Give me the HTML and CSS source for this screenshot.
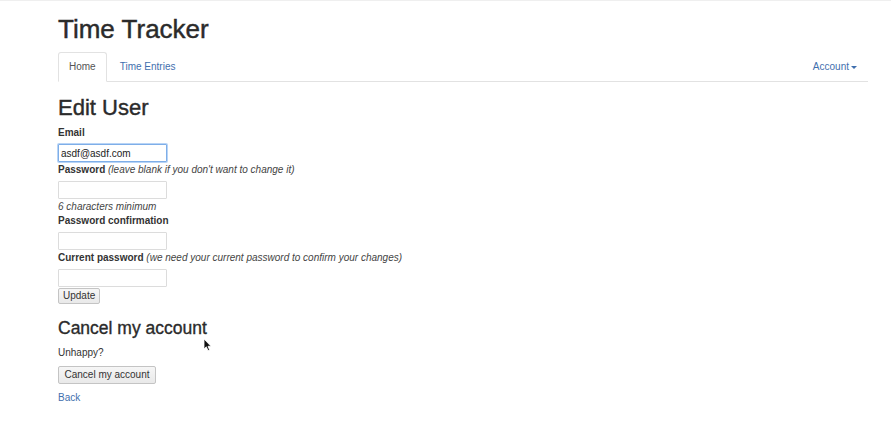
FILE: index.html
```html
<!DOCTYPE html>
<html lang="en">
<head>
<meta charset="utf-8">
<title>Time Tracker</title>
<link rel="stylesheet" href="styles.css">
</head>
<body>
<div class="container">
  <h1 class="brand">Time Tracker</h1>
  <ul class="tabs">
    <li class="tab active"><a href="#">Home</a></li>
    <li class="tab"><a href="#">Time Entries</a></li>
    <li class="tab right"><a href="#">Account<span class="caret"></span></a></li>
  </ul>

  <h2 class="title">Edit User</h2>
  <form class="form">
    <label class="lbl">Email</label>
    <input class="inp focus" type="email" value="asdf@asdf.com">
    <label class="lbl">Password <i class="note">(leave blank if you don't want to change it)</i></label>
    <input class="inp" type="password">
    <em class="hint">6 characters minimum</em>
    <label class="lbl">Password confirmation</label>
    <input class="inp" type="password">
    <label class="lbl">Current password <i class="note">(we need your current password to confirm your changes)</i></label>
    <input class="inp" type="password">
    <div class="actions"><button type="button" class="btn">Update</button></div>
  </form>

  <h3 class="subtitle">Cancel my account</h3>
  <p class="text">Unhappy?</p>
  <div class="actions2"><button type="button" class="btn btn-wide">Cancel my account</button></div>
  <a class="back" href="#">Back</a>
</div>
<svg class="cursor" width="9" height="14" viewBox="0 0 9 14"><path d="M1 1 L1 11 L3.3 8.8 L5 12.6 L6.6 11.9 L5 8.3 L8 8.3 Z" fill="#111" stroke="#fff" stroke-width="0.8"/></svg>
</body>
</html>
```

FILE: styles.css
```css
html, body {
  margin: 0;
  padding: 0;
  background: #fff;
}
body {
  font-family: "Liberation Sans", Arial, sans-serif;
  font-size: 10px;
  color: #333;
  border-top: 1px solid #efefef;
  position: relative;
  min-height: 427px;
}
.container {
  padding: 0 23px 0 58px;
}
.brand {
  margin: 13px 0 8px;
  font-size: 26px;
  line-height: 30px;
  font-weight: normal;
  color: #2b2b2b;
  -webkit-text-stroke: 0.45px #2b2b2b;
}
.tabs {
  list-style: none;
  margin: 0;
  padding: 0;
  display: flex;
  border-bottom: 1px solid #e2e2e2;
  height: 29px;
}
.tab {
  margin-right: 2px;
  margin-bottom: -1px;
}
.tab a {
  display: block;
  padding: 0 10px;
  line-height: 28px;
  border: 1px solid transparent;
  border-radius: 3px 3px 0 0;
  color: #3f6fae;
  text-decoration: none;
  font-size: 10px;
}
.tab.active a {
  color: #555;
  background: #fff;
  border-color: #e2e2e2 #e2e2e2 #fff;
}
.tab.right {
  margin-left: auto;
  margin-right: 0;
}
.caret {
  display: inline-block;
  width: 0;
  height: 0;
  margin-left: 2px;
  vertical-align: middle;
  border-top: 3px solid #3f6fae;
  border-left: 3px solid transparent;
  border-right: 3px solid transparent;
}
.title {
  margin: 13px 0 0;
  font-size: 22px;
  line-height: 26px;
  font-weight: normal;
  color: #2b2b2b;
  -webkit-text-stroke: 0.4px #2b2b2b;
}
.form {
  margin: 6px 0 0;
  display: flex;
  flex-direction: column;
  align-items: flex-start;
}
.lbl {
  display: block;
  font-weight: bold;
  line-height: 12px;
  margin: 2px 0 5px;
  color: #333;
}
.lbl:first-child {
  margin-top: 0;
}
.note {
  font-weight: normal;
  font-style: italic;
  color: #444;
}
.inp {
  box-sizing: border-box;
  width: 109px;
  height: 18px;
  margin: 0;
  padding: 0 2px;
  border: 1px solid #dcdcdc;
  border-radius: 1px;
  font-family: "Liberation Sans", Arial, sans-serif;
  font-size: 10px;
  color: #222;
  background: #fff;
  outline: none;
}
.inp.focus {
  border: 1px solid #7eaee8;
  box-shadow: 0 0 0 1px #b8d4f6;
}
.hint {
  display: block;
  line-height: 12px;
  margin-top: 2px;
  color: #444;
}
.actions {
  margin-top: 1px;
}
.btn {
  box-sizing: border-box;
  height: 16px;
  padding: 0 4px;
  font-family: "Liberation Sans", Arial, sans-serif;
  font-size: 10px;
  color: #333;
  background: linear-gradient(#f6f6f6, #e9e9e9);
  border: 1px solid #c4c4c4;
  border-radius: 2px;
  line-height: 14px;
}
.subtitle {
  margin: 14px 0 0;
  font-size: 17.5px;
  line-height: 20px;
  font-weight: normal;
  color: #2b2b2b;
  -webkit-text-stroke: 0.35px #2b2b2b;
}
.text {
  margin: 9px 0 0;
  line-height: 12px;
}
.actions2 {
  margin-top: 7px;
}
.btn-wide {
  width: 98px;
  height: 18px;
  padding: 0;
}
.back {
  display: block;
  margin-top: 8px;
  line-height: 12px;
  color: #3f6fae;
  text-decoration: none;
}
.cursor {
  position: absolute;
  left: 203px;
  top: 337px;
}
```
